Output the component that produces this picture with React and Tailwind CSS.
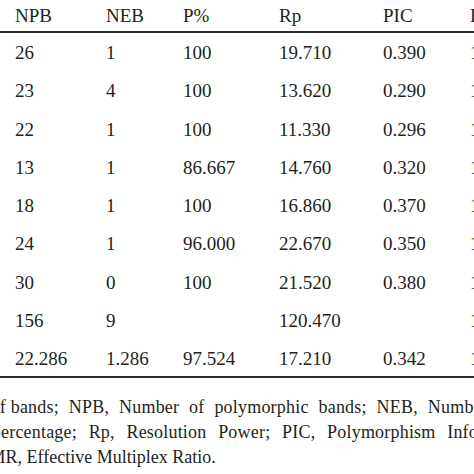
import React from 'react';

/* ── DATA ── */

const rows = [
  ['26', '1', '100', '19.710', '0.390', '1.000'],
  ['23', '4', '100', '13.620', '0.290', '1.000'],
  ['22', '1', '100', '11.330', '0.296', '1.000'],
  ['13', '1', '86.667', '14.760', '0.320', '1.000'],
  ['18', '1', '100', '16.860', '0.370', '1.000'],
  ['24', '1', '96.000', '22.670', '0.350', '1.000'],
  ['30', '0', '100', '21.520', '0.380', '1.000'],
  ['156', '9', '', '120.470', '', '1.000'],
  ['22.286', '1.286', '97.524', '17.210', '0.342', '1.000'],
];

const cols = 'grid grid-cols-[91px_77px_96px_104px_87px_1fr] pl-[15px]';

const App = () => {
  return (
    <div
      className="w-[474px] h-[474px] overflow-hidden bg-white text-[#231f20]"
      style={{ fontFamily: '"Liberation Serif", "Times New Roman", serif' }}
    >
      {/* Header row */}
      <div className={`${cols} h-[31px] text-[19px] leading-[31px] whitespace-nowrap`}>
        <div>NPB</div>
        <div>NEB</div>
        <div>P%</div>
        <div>Rp</div>
        <div>PIC</div>
        <div className="overflow-hidden">EMR</div>
      </div>
      <div className="h-[2px] bg-[#2b2b2b] mb-[1px]" />

      {/* Body rows */}
      {rows.map((r, i) => (
        <div key={i} className={`${cols} h-[38.3px] text-[19px] leading-[38.3px] whitespace-nowrap`}>
          {r.map((c, j) => (
            <div key={j} className={j === 5 ? 'overflow-hidden' : ''}>{c}</div>
          ))}
        </div>
      ))}
      <div className="h-[2px] bg-[#2b2b2b] -mt-[2.5px]" />

      {/* Footnote, justified lines cut at both edges */}
      <div className="mt-[17px] text-[18px] leading-[25px] tracking-[0.2px] whitespace-nowrap">
        <div className="-ml-[9.4px]">
          of <span className="[word-spacing:5.2px]">bands; NPB, Number of polymorphic bands; NEB, Number of</span>
        </div>
        <div className="-ml-[8.2px] [word-spacing:7px]">
          percentage; Rp, Resolution Power; PIC, Polymorphism Information
        </div>
        <div className="-ml-[21.4px] tracking-normal">EMR, Effective Multiplex Ratio.</div>
      </div>
    </div>
  );
};

export default App;
